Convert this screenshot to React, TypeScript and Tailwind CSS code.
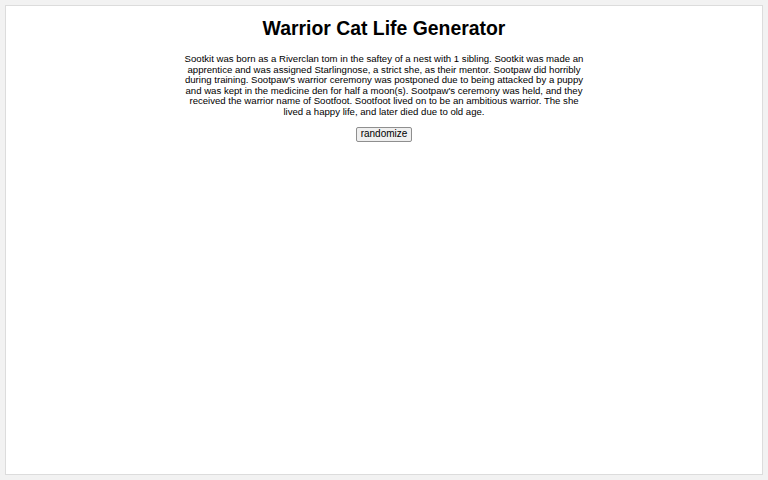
export default function App() {
  return (
    <div
      className="h-[480px] w-[768px] bg-[#f2f2f2] p-[5px]"
      style={{ fontFamily: '"Liberation Sans", Arial, sans-serif' }}
    >
      <div className="flex h-[470px] flex-col items-center border border-[#dcdcdc] bg-white">
        <h1 className="mt-[10px] text-[19.4px] font-bold leading-[24px] text-black">
          Warrior Cat Life Generator
        </h1>
        <p className="mt-[14px] w-[402px] text-center text-[9.6px] leading-[10.6px] text-black">
          Sootkit was born as a Riverclan tom in the saftey of a nest with 1 sibling. Sootkit was made an
          apprentice and was assigned Starlingnose, a strict she, as their mentor. Sootpaw did horribly
          during training. Sootpaw's warrior ceremony was postponed due to being attacked by a puppy
          and was kept in the medicine den for half a moon(s). Sootpaw's ceremony was held, and they
          received the warrior name of Sootfoot. Sootfoot lived on to be an ambitious warrior. The she
          lived a happy life, and later died due to old age.
        </p>
        <button className="mt-[9.5px] rounded-[2px] border border-[#8f8f8f] bg-[#efefef] px-[4px] text-[10px] leading-[12.5px] text-black">
          randomize
        </button>
      </div>
    </div>
  );
}
